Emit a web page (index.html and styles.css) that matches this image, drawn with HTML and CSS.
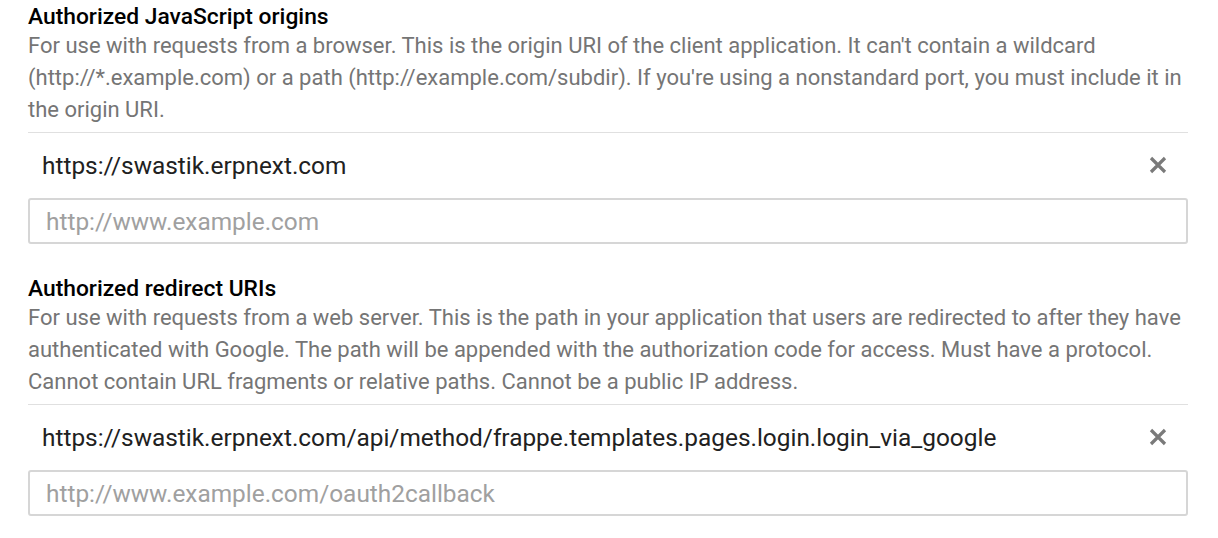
FILE: index.html
```html
<!DOCTYPE html>
<html>
<head>
<meta charset="utf-8">
<link rel="stylesheet" href="styles.css">
</head>
<body>
<div class="page">
  <section class="section">
    <h3 class="title">Authorized JavaScript origins</h3>
    <p class="desc">For use with requests from a browser. This is the origin URI of the client application. It can't contain a wildcard (http://*.example.com) or a path (http://example.com/subdir). If you're using a nonstandard port, you must include it in the origin URI.</p>
    <div class="entry">
      <span class="entry-text">https://swastik.erpnext.com</span>
      <span class="remove" aria-label="Remove"><svg width="18" height="18" viewBox="0 0 18 18"><path d="M2 2L16 16M16 2L2 16" stroke="#7a7a7a" stroke-width="3.2" stroke-linecap="butt"/></svg></span>
    </div>
    <input class="field" type="text" placeholder="http://www.example.com">
  </section>
  <section class="section second">
    <h3 class="title">Authorized redirect URIs</h3>
    <p class="desc">For use with requests from a web server. This is the path in your application that users are redirected to after they have authenticated with Google. The path will be appended with the authorization code for access. Must have a protocol. Cannot contain URL fragments or relative paths. Cannot be a public IP address.</p>
    <div class="entry">
      <span class="entry-text">https://swastik.erpnext.com/api/method/frappe.templates.pages.login.login_via_google</span>
      <span class="remove" aria-label="Remove"><svg width="18" height="18" viewBox="0 0 18 18"><path d="M2 2L16 16M16 2L2 16" stroke="#7a7a7a" stroke-width="3.2" stroke-linecap="butt"/></svg></span>
    </div>
    <input class="field" type="text" placeholder="http://www.example.com/oauth2callback">
  </section>
</div>
</body>
</html>
```

FILE: styles.css
```css
html, body {
  margin: 0;
  padding: 0;
  background: #fff;
}
body {
  font-family: Roboto, "Liberation Sans", sans-serif;
}
.page {
  width: 1160px;
  padding: 4px 28px 0 28px;
}
.section.second {
  margin-top: 32px;
}
.title {
  margin: 0;
  font-size: 22.8px;
  line-height: 26px;
  font-weight: 500;
  color: #000;
}
.desc {
  margin: 0;
  font-size: 22px;
  line-height: 32px;
  color: #757575;
  padding-bottom: 6px;
  border-bottom: 1px solid #e0e0e0;
}
.entry {
  display: flex;
  align-items: center;
  justify-content: space-between;
  height: 64px;
  padding: 0 21px 0 14px;
}
.entry-text {
  font-size: 24.4px;
  color: #212121;
}
.remove {
  display: flex;
  width: 18px;
  height: 18px;
}
.field {
  display: block;
  box-sizing: border-box;
  width: 100%;
  height: 46px;
  margin: 1px 0 0 0;
  padding: 0 0 0 16px;
  border: 2px solid #d6d6d6;
  border-radius: 3px;
  font-family: Roboto, "Liberation Sans", sans-serif;
  font-size: 24.4px;
  color: #212121;
  outline: none;
}
.field::placeholder {
  color: #a0a0a0;
}
```
